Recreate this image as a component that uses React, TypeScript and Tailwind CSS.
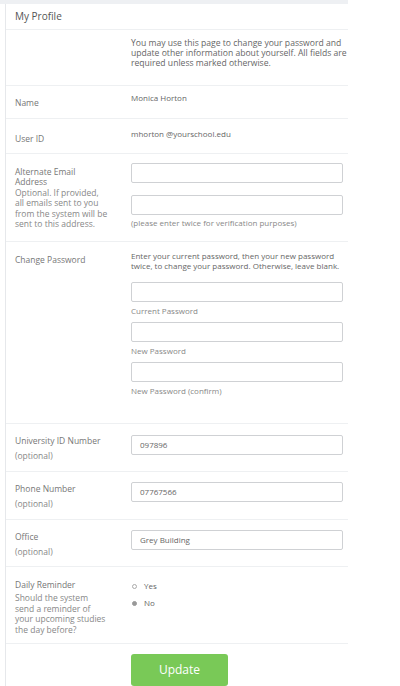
import React from "react";

const Input = ({ value = "", className = "" }: { value?: string; className?: string }) => (
  <div className={`h-[20px] w-[212px] rounded-[2px] border border-[#cfd1d4] bg-white px-[8px] text-[8px] leading-[18px] text-[#666] ${className}`}>
    {value}
  </div>
);

export default function App() {
  return (
    <div className="h-[686px] w-[400px] overflow-hidden bg-white text-[8px] text-[#777]" style={{ fontFamily: '"Open Sans", sans-serif' }}>
      <div className="h-[4px] w-[348px] bg-[#eef0f3]" />
      <div className="ml-[5px] w-[343px] border-l border-[#e6e8eb]">
        {/* heading */}
        <div className="flex h-[26px] items-center border-b border-[#eef0f2] pl-[9px] text-[10px] text-[#555]">My Profile</div>
        {/* description */}
        <div className="flex h-[56px] border-b border-[#eef0f2]">
          <div className="w-[125px] shrink-0" />
          <div className="w-[216px] pt-[8px] text-[8.6px] leading-[10px] text-[#666]">
            You may use this page to change your password and update other information about yourself. All fields are required unless marked otherwise.
          </div>
        </div>
        {/* name */}
        <div className="flex h-[33px] border-b border-[#eef0f2]">
          <div className="w-[125px] shrink-0 pl-[9px] pt-[12px] text-[8.5px] leading-[10px]">Name</div>
          <div className="pt-[7px] leading-[10px] text-[#666]">Monica Horton</div>
        </div>
        {/* user id */}
        <div className="flex h-[35px] border-b border-[#eef0f2]">
          <div className="w-[125px] shrink-0 pl-[9px] pt-[15px] text-[8.5px] leading-[10px]">User ID</div>
          <div className="pt-[10px] leading-[10px] text-[#666]">mhorton @yourschool.edu</div>
        </div>
        {/* alt email */}
        <div className="flex h-[88px] border-b border-[#eef0f2]">
          <div className="w-[125px] shrink-0 pl-[9px] pt-[13px] text-[8.5px] leading-[10.4px]">
            <div className="w-[80px]">Alternate Email Address</div>
            <div className="whitespace-nowrap text-[#888]">
              Optional. If provided,
              <br />
              all emails sent to you
              <br />
              from the system will be
              <br />
              sent to this address.
            </div>
          </div>
          <div className="pt-[9px]">
            <Input />
            <Input className="mt-[12px]" />
            <div className="mt-[3px] leading-[10px] text-[#888]">(please enter twice for verification purposes)</div>
          </div>
        </div>
        {/* change password */}
        <div className="flex h-[182px] border-b border-[#eef0f2]">
          <div className="w-[125px] shrink-0 pl-[9px] pt-[13px] text-[8.5px] leading-[10px]">Change Password</div>
          <div className="pt-[9px]">
            <div className="w-[216px] leading-[9.5px] text-[#666]">Enter your current password, then your new password twice, to change your password. Otherwise, leave blank.</div>
            <Input className="mt-[12px]" />
            <div className="mt-[4px] leading-[10px] text-[#888]">Current Password</div>
            <Input className="mt-[6px]" />
            <div className="mt-[4px] leading-[10px] text-[#888]">New Password</div>
            <Input className="mt-[6px]" />
            <div className="mt-[4px] leading-[10px] text-[#888]">New Password (confirm)</div>
          </div>
        </div>
        {/* university id */}
        <div className="flex h-[48px] border-b border-[#eef0f2]">
          <div className="w-[125px] shrink-0 pl-[9px] pt-[12px] text-[8.5px] leading-[10px]">
            <div>University ID Number</div>
            <div className="mt-[5px] text-[#888]">(optional)</div>
          </div>
          <div className="pt-[11px]">
            <Input value="097896" />
          </div>
        </div>
        {/* phone */}
        <div className="flex h-[48px] border-b border-[#eef0f2]">
          <div className="w-[125px] shrink-0 pl-[9px] pt-[12px] text-[8.5px] leading-[10px]">
            <div>Phone Number</div>
            <div className="mt-[5px] text-[#888]">(optional)</div>
          </div>
          <div className="pt-[10px]">
            <Input value="07767566" />
          </div>
        </div>
        {/* office */}
        <div className="flex h-[47px] border-b border-[#eef0f2]">
          <div className="w-[125px] shrink-0 pl-[9px] pt-[12px] text-[8.5px] leading-[10px]">
            <div>Office</div>
            <div className="mt-[5px] text-[#888]">(optional)</div>
          </div>
          <div className="pt-[10px]">
            <Input value="Grey Building" />
          </div>
        </div>
        {/* daily reminder */}
        <div className="flex h-[77px] border-b border-[#eef0f2]">
          <div className="w-[125px] shrink-0 pl-[9px] pt-[13px] text-[8.5px] leading-[10.4px]">
            <div>Daily Reminder</div>
            <div className="mt-[3px] whitespace-nowrap text-[#888]">
              Should the system
              <br />
              send a reminder of
              <br />
              your upcoming studies
              <br />
              the day before?
            </div>
          </div>
          <div className="pt-[14px] leading-[10px] text-[#666]">
            <div className="flex items-center gap-[7px]">
              <span className="ml-[1px] h-[5px] w-[5px] rounded-full border border-[#aaa]" />
              <span>Yes</span>
            </div>
            <div className="mt-[7px] flex items-center gap-[7px]">
              <span className="ml-[1px] flex h-[5px] w-[5px] items-center justify-center rounded-full border border-[#999] bg-[#999]" />
              <span>No</span>
            </div>
          </div>
        </div>
        {/* button */}
        <div className="flex pt-[10px]">
          <div className="w-[125px] shrink-0" />
          <div className="flex h-[32px] w-[97px] items-center justify-center rounded-[3px] bg-[#79c957] text-[12px] text-white">Update</div>
        </div>
      </div>
    </div>
  );
}
